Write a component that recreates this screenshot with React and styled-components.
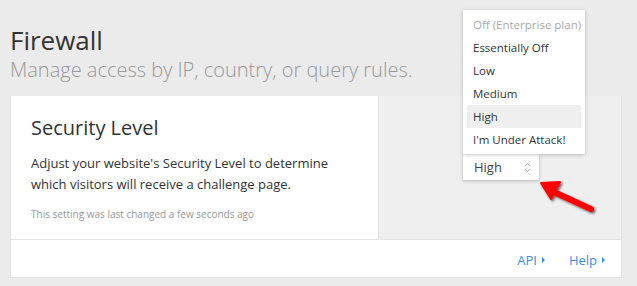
import React from "react";
import styled, { createGlobalStyle } from "styled-components";

const Global = createGlobalStyle`
  html, body { margin: 0; padding: 0; }
  body {
    background: #ebebeb;
    font-family: "Open Sans", "Liberation Sans", sans-serif;
    color: #333;
    width: 637px;
    height: 286px;
    overflow: hidden;
  }
`;

const Page = styled.div`
  padding: 23px 14px 0 10px;
  position: relative;
`;

const Title = styled.h1`
  margin: 0;
  font-size: 26px;
  font-weight: 400;
  line-height: 34px;
  color: #333;
`;

const Subtitle = styled.p`
  margin: 0 0 13px;
  font-size: 20px;
  font-weight: 300;
  line-height: 26px;
  color: #999;
`;

const Card = styled.div`
  background: #fff;
  border: 1px solid #e3e3e3;
  border-top: none;
  width: 612px;
  box-sizing: border-box;
`;

const CardBody = styled.div`
  display: grid;
  grid-template-columns: 367px 1fr;
  height: 143px;
  border-bottom: 1px solid #e3e3e3;
`;

const Info = styled.div`
  padding: 18px 20px 0 20px;
`;

const CardTitle = styled.h2`
  margin: 0 0 11px;
  font-size: 20px;
  font-weight: 400;
  line-height: 28px;
  color: #333;
`;

const Desc = styled.p`
  margin: 0 0 11px;
  font-size: 13px;
  line-height: 21px;
  color: #333;
`;

const Meta = styled.p`
  margin: 0;
  font-size: 10px;
  line-height: 16px;
  color: #999;
`;

const Control = styled.div`
  background: #efefef;
  border-left: 1px solid #e3e3e3;
  padding: 58px 0 0 84px;
`;

const SelectWrap = styled.div`
  position: relative;
  width: 76px;
`;

const Select = styled.div`
  display: flex;
  align-items: center;
  justify-content: space-between;
  height: 26px;
  box-sizing: border-box;
  padding: 0 8px 0 11px;
  background: #fff;
  box-shadow: 0 1px 3px rgba(0, 0, 0, 0.25);
  font-size: 13px;
  color: #444;
`;

const Menu = styled.ul`
  position: absolute;
  left: 0;
  bottom: 100%;
  width: 122px;
  margin: 0;
  padding: 3px 4px;
  list-style: none;
  background: #fff;
  box-shadow: 0 1px 4px rgba(0, 0, 0, 0.22);
  box-sizing: border-box;
`;

const Item = styled.li`
  height: 23px;
  line-height: 23px;
  padding-left: 6px;
  font-size: 11.5px;
  white-space: nowrap;
  color: ${(p) => (p.$disabled ? "#aaa" : "#333")};
  background: ${(p) => (p.$active ? "#efefef" : "transparent")};
`;

const Footer = styled.div`
  display: flex;
  justify-content: flex-end;
  align-items: center;
  gap: 24px;
  height: 37px;
  padding-right: 16px;
  padding-top: 2px;
  box-sizing: border-box;
`;

const Link = styled.a`
  display: flex;
  align-items: center;
  gap: 5px;
  font-size: 13px;
  color: #3a8ee0;
  text-decoration: none;
`;

const Caret = styled.span`
  width: 0;
  height: 0;
  border-top: 3px solid transparent;
  border-bottom: 3px solid transparent;
  border-left: 3px solid #3a8ee0;
`;

const Arrow = styled.svg`
  position: absolute;
  left: 538px;
  top: 178px;
  overflow: visible;
`;

const items = [
  { label: "Off (Enterprise plan)", disabled: true },
  { label: "Essentially Off" },
  { label: "Low" },
  { label: "Medium" },
  { label: "High", active: true },
  { label: "I'm Under Attack!" },
];

export default function App() {
  return (
    <>
      <Global />
      <Page>
        <Title>Firewall</Title>
        <Subtitle>Manage access by IP, country, or query rules.</Subtitle>
        <Card>
          <CardBody>
            <Info>
              <CardTitle>Security Level</CardTitle>
              <Desc>
                Adjust your website's Security Level to determine
                <br />
                which visitors will receive a challenge page.
              </Desc>
              <Meta>This setting was last changed a few seconds ago</Meta>
            </Info>
            <Control>
              <SelectWrap>
                <Menu>
                  {items.map((it) => (
                    <Item key={it.label} $disabled={it.disabled} $active={it.active}>
                      {it.label}
                    </Item>
                  ))}
                </Menu>
                <Select>
                  <span>High</span>
                  <svg width="7" height="11" viewBox="0 0 7 11">
                    <path d="M1 4 L3.5 1.5 L6 4" fill="none" stroke="#bbb" strokeWidth="1" />
                    <path d="M1 7 L3.5 9.5 L6 7" fill="none" stroke="#bbb" strokeWidth="1" />
                  </svg>
                </Select>
              </SelectWrap>
            </Control>
          </CardBody>
          <Footer>
            <Link>API <Caret /></Link>
            <Link>Help <Caret /></Link>
          </Footer>
        </Card>
        <Arrow width="64" height="40" viewBox="0 0 64 40">
          <defs>
            <filter id="sh" x="-20%" y="-20%" width="150%" height="150%">
              <feDropShadow dx="1.5" dy="1.5" stdDeviation="1.2" floodColor="#000" floodOpacity="0.6" />
            </filter>
          </defs>
          <g filter="url(#sh)">
            <path d="M16 14 L53 31" stroke="#ff0000" strokeWidth="6" strokeLinecap="round" fill="none" />
            <path d="M3 5 L22 4 L13 21 Z" fill="#ff0000" stroke="#ff0000" strokeWidth="2" strokeLinejoin="round" />
          </g>
        </Arrow>
      </Page>
    </>
  );
}
